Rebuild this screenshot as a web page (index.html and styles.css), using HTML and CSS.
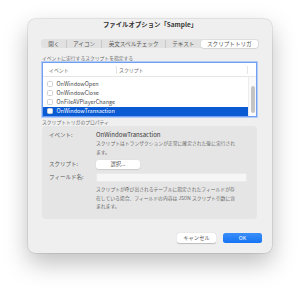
FILE: index.html
```html
<!DOCTYPE html>
<html lang="ja">
<head>
    <meta charset="UTF-8">
    <meta name="viewport" content="width=device-width, initial-scale=1.0">
    <title>ファイルオプション「Sample」</title>
    <link rel="stylesheet" href="styles.css">
</head>
<body>
    <div class="dialog">
        <div class="title">ファイルオプション「Sample」</div>

        <div class="tabs">
            <span class="tab">開く</span>
            <span class="tab">アイコン</span>
            <span class="tab">英文スペルチェック</span>
            <span class="tab">テキスト</span>
            <span class="tab active">スクリプトトリガ</span>
        </div>

        <div class="caption first">イベントに実行するスクリプトを指定する</div>
        <div class="list">
            <div class="list-head">
                <span class="col-event">イベント</span>
                <span class="col-script">スクリプト</span>
                <span class="col-end"></span>
            </div>
            <div class="list-body">
                <div class="rows">
                    <div class="row"><span class="check"></span>OnWindowOpen</div>
                    <div class="row"><span class="check"></span>OnWindowClose</div>
                    <div class="row"><span class="check"></span>OnFileAVPlayerChange</div>
                    <div class="row selected"><span class="check"></span>OnWindowTransaction</div>
                </div>
                <div class="scrollbar"><div class="thumb"></div></div>
            </div>
        </div>

        <div class="caption">スクリプトトリガのプロパティ</div>
        <div class="panel">
            <div class="label">イベント:</div>
            <div class="value">
                <div class="event-name">OnWindowTransaction</div>
                <div class="note">スクリプトはトランザクションが正常に確定された後に実行されます。</div>
            </div>

            <div class="label mid">スクリプト:</div>
            <div class="value spaced"><span class="button select">選択...</span></div>

            <div class="label mid">フィールド名:</div>
            <div class="value spaced"><div class="field"></div></div>

            <div class="value wide">
                <div class="note">スクリプトが呼び出されるテーブルに指定されたフィールドが存在している場合、フィールドの内容は JSON スクリプト引数に含まれます。</div>
            </div>
        </div>

        <div class="actions">
            <span class="button cancel">キャンセル</span>
            <span class="button ok">OK</span>
        </div>
    </div>
</body>
</html>
```

FILE: styles.css
```css
/* 页面 */
body {
    margin: 0;
    width: 300px;
    height: 290px;
    background: #ffffff;
    font-family: "Noto Sans CJK JP", "Noto Sans", sans-serif;
    color: #444;
    overflow: hidden;
}

/* 对话框 */
.dialog {
    margin: 19px 0 0 28px;
    width: 244px;
    height: 234px;
    box-sizing: border-box;
    padding: 2px 0 10px 0;
    background: #efefef;
    border-radius: 7px;
    box-shadow: 0 10px 24px rgba(0, 0, 0, 0.26), 0 0 0 0.5px rgba(0, 0, 0, 0.16);
    display: flex;
    flex-direction: column;
}

.title {
    height: 8px;
    line-height: 8px;
    text-align: center;
    font-size: 6.4px;
    font-weight: bold;
    color: #333;
}

/* 标签页 */
.tabs {
    margin: 10px 13px 0 13px;
    height: 9px;
    background: #e1e1e1;
    border-radius: 3px;
    display: flex;
    align-items: center;
    padding: 0 1px;
}
.tab {
    flex: 1 1 auto;
    text-align: center;
    font-size: 5.6px;
    line-height: 8px;
    height: 8px;
    color: #555;
    border-left: 0.5px solid #c9c9c9;
}
.tab:first-child {
    border-left: none;
}
.tab.active {
    background: #ffffff;
    border-radius: 2.5px;
    border-left: none;
    box-shadow: 0 0.5px 1px rgba(0, 0, 0, 0.2);
}

.caption {
    margin: 1px 14px 0 14px;
    height: 7px;
    line-height: 7px;
    font-size: 4.8px;
    color: #666;
}
.caption.first {
    margin-top: 6px;
}

/* 列表 */
.list {
    margin: 1px 15px 0 14px;
    height: 55px;
    box-sizing: border-box;
    background: #ffffff;
    border: 1px solid #6f9ff2;
    box-shadow: 0 0 0 1px #b3cdf7;
    display: flex;
    flex-direction: column;
}
.list-head {
    height: 14px;
    box-sizing: border-box;
    border-bottom: 0.5px solid #e6e6e6;
    display: flex;
    align-items: center;
    font-size: 4.9px;
    color: #666;
}
.col-event {
    width: 74px;
    padding-left: 6px;
    box-sizing: border-box;
    border-right: 0.5px solid #e6e6e6;
    line-height: 8px;
}
.col-script {
    width: 131px;
    padding-left: 2px;
    box-sizing: border-box;
    border-right: 0.5px solid #e6e6e6;
    line-height: 8px;
}
.list-body {
    flex: 1;
    display: flex;
}
.rows {
    flex: 1;
    padding-top: 2.5px;
}
.row {
    height: 9px;
    display: flex;
    align-items: center;
    font-size: 5.5px;
    color: #4a4a4a;
}
.row.selected {
    background: #0a5ad4;
    color: #ffffff;
}
.check {
    width: 5.5px;
    height: 5.5px;
    margin: 0 4px 0 4px;
    box-sizing: border-box;
    background: #ffffff;
    border: 0.5px solid #d0d0d0;
    border-radius: 1.5px;
}
.scrollbar {
    width: 8px;
    background: #fafafa;
    border-left: 0.5px solid #ededed;
    padding-top: 9px;
    box-sizing: border-box;
    display: flex;
    justify-content: center;
}
.thumb {
    width: 4px;
    height: 27px;
    background: #c4c4c4;
    border-radius: 2px;
}

/* 属性面板 */
.panel {
    margin: 1px 15px 0 14px;
    height: 93px;
    box-sizing: border-box;
    padding: 5px 10px 0 7px;
    background: #e5e5e5;
    border-radius: 4px;
    display: grid;
    grid-template-columns: 47px 1fr;
    grid-auto-rows: min-content;
    align-items: start;
}
.label {
    font-size: 5.5px;
    line-height: 8px;
    color: #555;
}
.label.mid {
    line-height: 9px;
    margin-top: 4px;
}
.value {
    font-size: 5px;
}
.value.spaced {
    margin-top: 4px;
}
.value.wide {
    grid-column: 2;
    margin-top: 3px;
}
.event-name {
    font-size: 6.1px;
    line-height: 8px;
    color: #383838;
}
.note {
    max-width: 142px;
    font-size: 4.8px;
    line-height: 8.5px;
    color: #666;
}
.field {
    height: 8.5px;
    background: #f6f6f6;
    border-radius: 1px;
    box-shadow: inset 0 0 0 0.5px #dedede;
}

/* 按钮 */
.button {
    display: inline-block;
    height: 9px;
    line-height: 9px;
    text-align: center;
    font-size: 5.3px;
    border-radius: 2.5px;
    box-sizing: border-box;
}
.select {
    width: 44px;
    background: #ffffff;
    color: #555;
    box-shadow: 0 0.5px 1px rgba(0, 0, 0, 0.2);
}
.actions {
    margin-top: 14px;
    padding-right: 10px;
    display: flex;
    justify-content: flex-end;
    gap: 7px;
}
.actions .button {
    width: 39px;
    height: 10px;
    line-height: 10px;
}
.cancel {
    background: #ffffff;
    color: #555;
    box-shadow: 0 0.5px 1px rgba(0, 0, 0, 0.22);
}
.ok {
    background: linear-gradient(#3a8ff8, #1774f3);
    color: #ffffff;
}
```
